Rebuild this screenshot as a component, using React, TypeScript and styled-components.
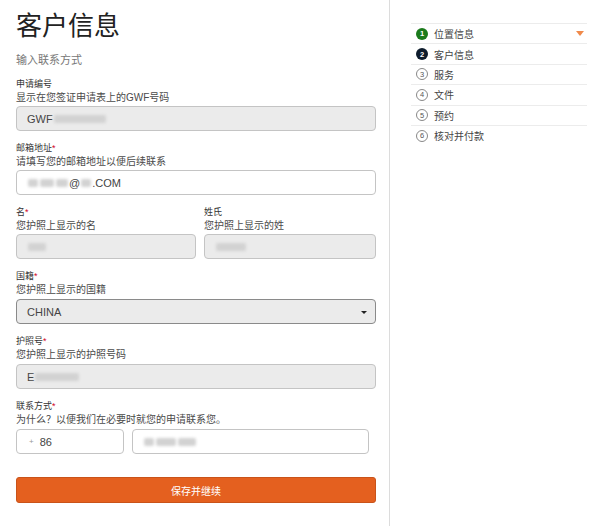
import styled, { createGlobalStyle } from "styled-components";

const GlobalStyle = createGlobalStyle`
  body {
    margin: 0;
    background: #fff;
    font-family: "Liberation Sans", "Noto Sans CJK SC", sans-serif;
    color: #333;
  }
`;

const Page = styled.div`
  display: flex;
  width: 600px;
  height: 526px;
  overflow: hidden;
`;

const Main = styled.main`
  width: 360px;
  padding: 10px 13px 0 16px;
  border-right: 1px solid #dcdcdc;
`;

const Title = styled.h1`
  margin: 0;
  font-size: 26px;
  line-height: 32px;
  font-weight: 400;
  color: #222;
`;

const Subtitle = styled.div`
  margin: 11px 0 9px;
  font-size: 11px;
  line-height: 15px;
  color: #777;
`;

const Group = styled.div`
  margin-bottom: 10px;
`;

const Row = styled.div`
  display: flex;
  gap: 8px;
`;

const Col = styled.div<{ $w?: number }>`
  flex: ${(p) => (p.$w ? `0 0 ${p.$w}px` : "1")};
  min-width: 0;
`;

const Label = styled.div`
  font-size: 9px;
  line-height: 14px;
  color: #333;
`;

const Star = styled.span`
  color: #d0021b;
`;

const Hint = styled.div`
  font-size: 10px;
  line-height: 14px;
  color: #4a4a4a;
  white-space: nowrap;
`;

const Field = styled.div<{ $disabled?: boolean; $select?: boolean; $mt?: number }>`
  position: relative;
  box-sizing: border-box;
  height: 25px;
  margin-top: ${(p) => p.$mt ?? 1}px;
  padding: 0 10px;
  display: flex;
  align-items: center;
  border: 1px solid ${(p) => (p.$select ? "#8a8a8a" : "#c4c4c4")};
  border-radius: 4px;
  background: ${(p) => (p.$disabled ? "#ebebeb" : "#fff")};
  font-size: 11px;
  color: #444;
`;

const Blur = styled.span<{ $w: number }>`
  display: inline-block;
  width: ${(p) => p.$w}px;
  height: 8px;
  margin: 0 1px;
  background: #d2d2d2;
  filter: blur(1.8px);
  border-radius: 2px;
`;

const Caret = styled.span`
  position: absolute;
  right: 8px;
  top: 11px;
  width: 0;
  height: 0;
  border-left: 3px solid transparent;
  border-right: 3px solid transparent;
  border-top: 3px solid #222;
`;

const Plus = styled.span`
  font-size: 8px;
  color: #999;
  margin: 0 6px 0 2px;
`;

const Button = styled.button`
  display: block;
  width: 100%;
  height: 26px;
  margin-top: 23px;
  border: 1px solid #c9531a;
  border-radius: 3px;
  background: #e4601f;
  color: #fff;
  font-family: inherit;
  font-size: 10px;
`;

const Side = styled.aside`
  width: 176px;
  padding: 23px 0 0 21px;
`;

const Step = styled.div`
  position: relative;
  display: flex;
  align-items: center;
  gap: 6px;
  height: 19.4px;
  border-top: 1px solid #ececec;
  padding-left: 5px;
  font-size: 10px;
  color: #444;
`;

const Dot = styled.span<{ $kind: "done" | "active" | "todo" }>`
  box-sizing: border-box;
  width: 12px;
  height: 12px;
  border-radius: 50%;
  display: inline-flex;
  align-items: center;
  justify-content: center;
  font-size: 7.5px;
  font-weight: ${(p) => (p.$kind === "todo" ? 400 : 700)};
  color: ${(p) => (p.$kind === "todo" ? "#555" : "#fff")};
  background: ${(p) =>
    p.$kind === "done" ? "#1b7a1b" : p.$kind === "active" ? "#0e1c2c" : "#fff"};
  border: ${(p) => (p.$kind === "todo" ? "1px solid #888" : "none")};
`;

const Toggle = styled.span`
  position: absolute;
  right: 3px;
  top: 7px;
  width: 0;
  height: 0;
  border-left: 4px solid transparent;
  border-right: 4px solid transparent;
  border-top: 5px solid #f08a4b;
`;

const steps = ["位置信息", "客户信息", "服务", "文件", "预约", "核对并付款"];

export default function App() {
  return (
    <Page>
      <GlobalStyle />
      <Main>
        <Title>客户信息</Title>
        <Subtitle>输入联系方式</Subtitle>

        <Group>
          <Label>申请编号</Label>
          <Hint>显示在您签证申请表上的GWF号码</Hint>
          <Field $disabled>
            GWF<Blur $w={52} />
          </Field>
        </Group>

        <Group>
          <Label>
            邮箱地址<Star>*</Star>
          </Label>
          <Hint>请填写您的邮箱地址以便后续联系</Hint>
          <Field>
            <Blur $w={10} />
            <Blur $w={14} />
            <Blur $w={12} />
            @<Blur $w={10} />
            .COM
          </Field>
        </Group>

        <Group>
          <Row>
            <Col $w={180}>
              <Label>
                名<Star>*</Star>
              </Label>
              <Hint>您护照上显示的名</Hint>
              <Field $disabled>
                <Blur $w={18} />
              </Field>
            </Col>
            <Col>
              <Label>姓氏</Label>
              <Hint>您护照上显示的姓</Hint>
              <Field $disabled>
                <Blur $w={30} />
              </Field>
            </Col>
          </Row>
        </Group>

        <Group>
          <Label>
            国籍<Star>*</Star>
          </Label>
          <Hint>您护照上显示的国籍</Hint>
          <Field $disabled $select $mt={2}>
            CHINA
            <Caret />
          </Field>
        </Group>

        <Group>
          <Label>
            护照号<Star>*</Star>
          </Label>
          <Hint>您护照上显示的护照号码</Hint>
          <Field $disabled $mt={2}>
            E<Blur $w={44} />
          </Field>
        </Group>

        <Group>
          <Label>
            联系方式<Star>*</Star>
          </Label>
          <Hint>为什么？以便我们在必要时就您的申请联系您。</Hint>
          <Row>
            <Col $w={108}>
              <Field $mt={2}>
                <Plus>+</Plus>86
              </Field>
            </Col>
            <Col $w={237}>
              <Field $mt={2}>
                <Blur $w={10} />
                <Blur $w={20} />
                <Blur $w={18} />
              </Field>
            </Col>
          </Row>
        </Group>

        <Button>保存并继续</Button>
      </Main>

      <Side>
        {steps.map((s, i) => (
          <Step key={s}>
            <Dot $kind={i === 0 ? "done" : i === 1 ? "active" : "todo"}>{i + 1}</Dot>
            {s}
            {i === 0 && <Toggle />}
          </Step>
        ))}
      </Side>
    </Page>
  );
}
